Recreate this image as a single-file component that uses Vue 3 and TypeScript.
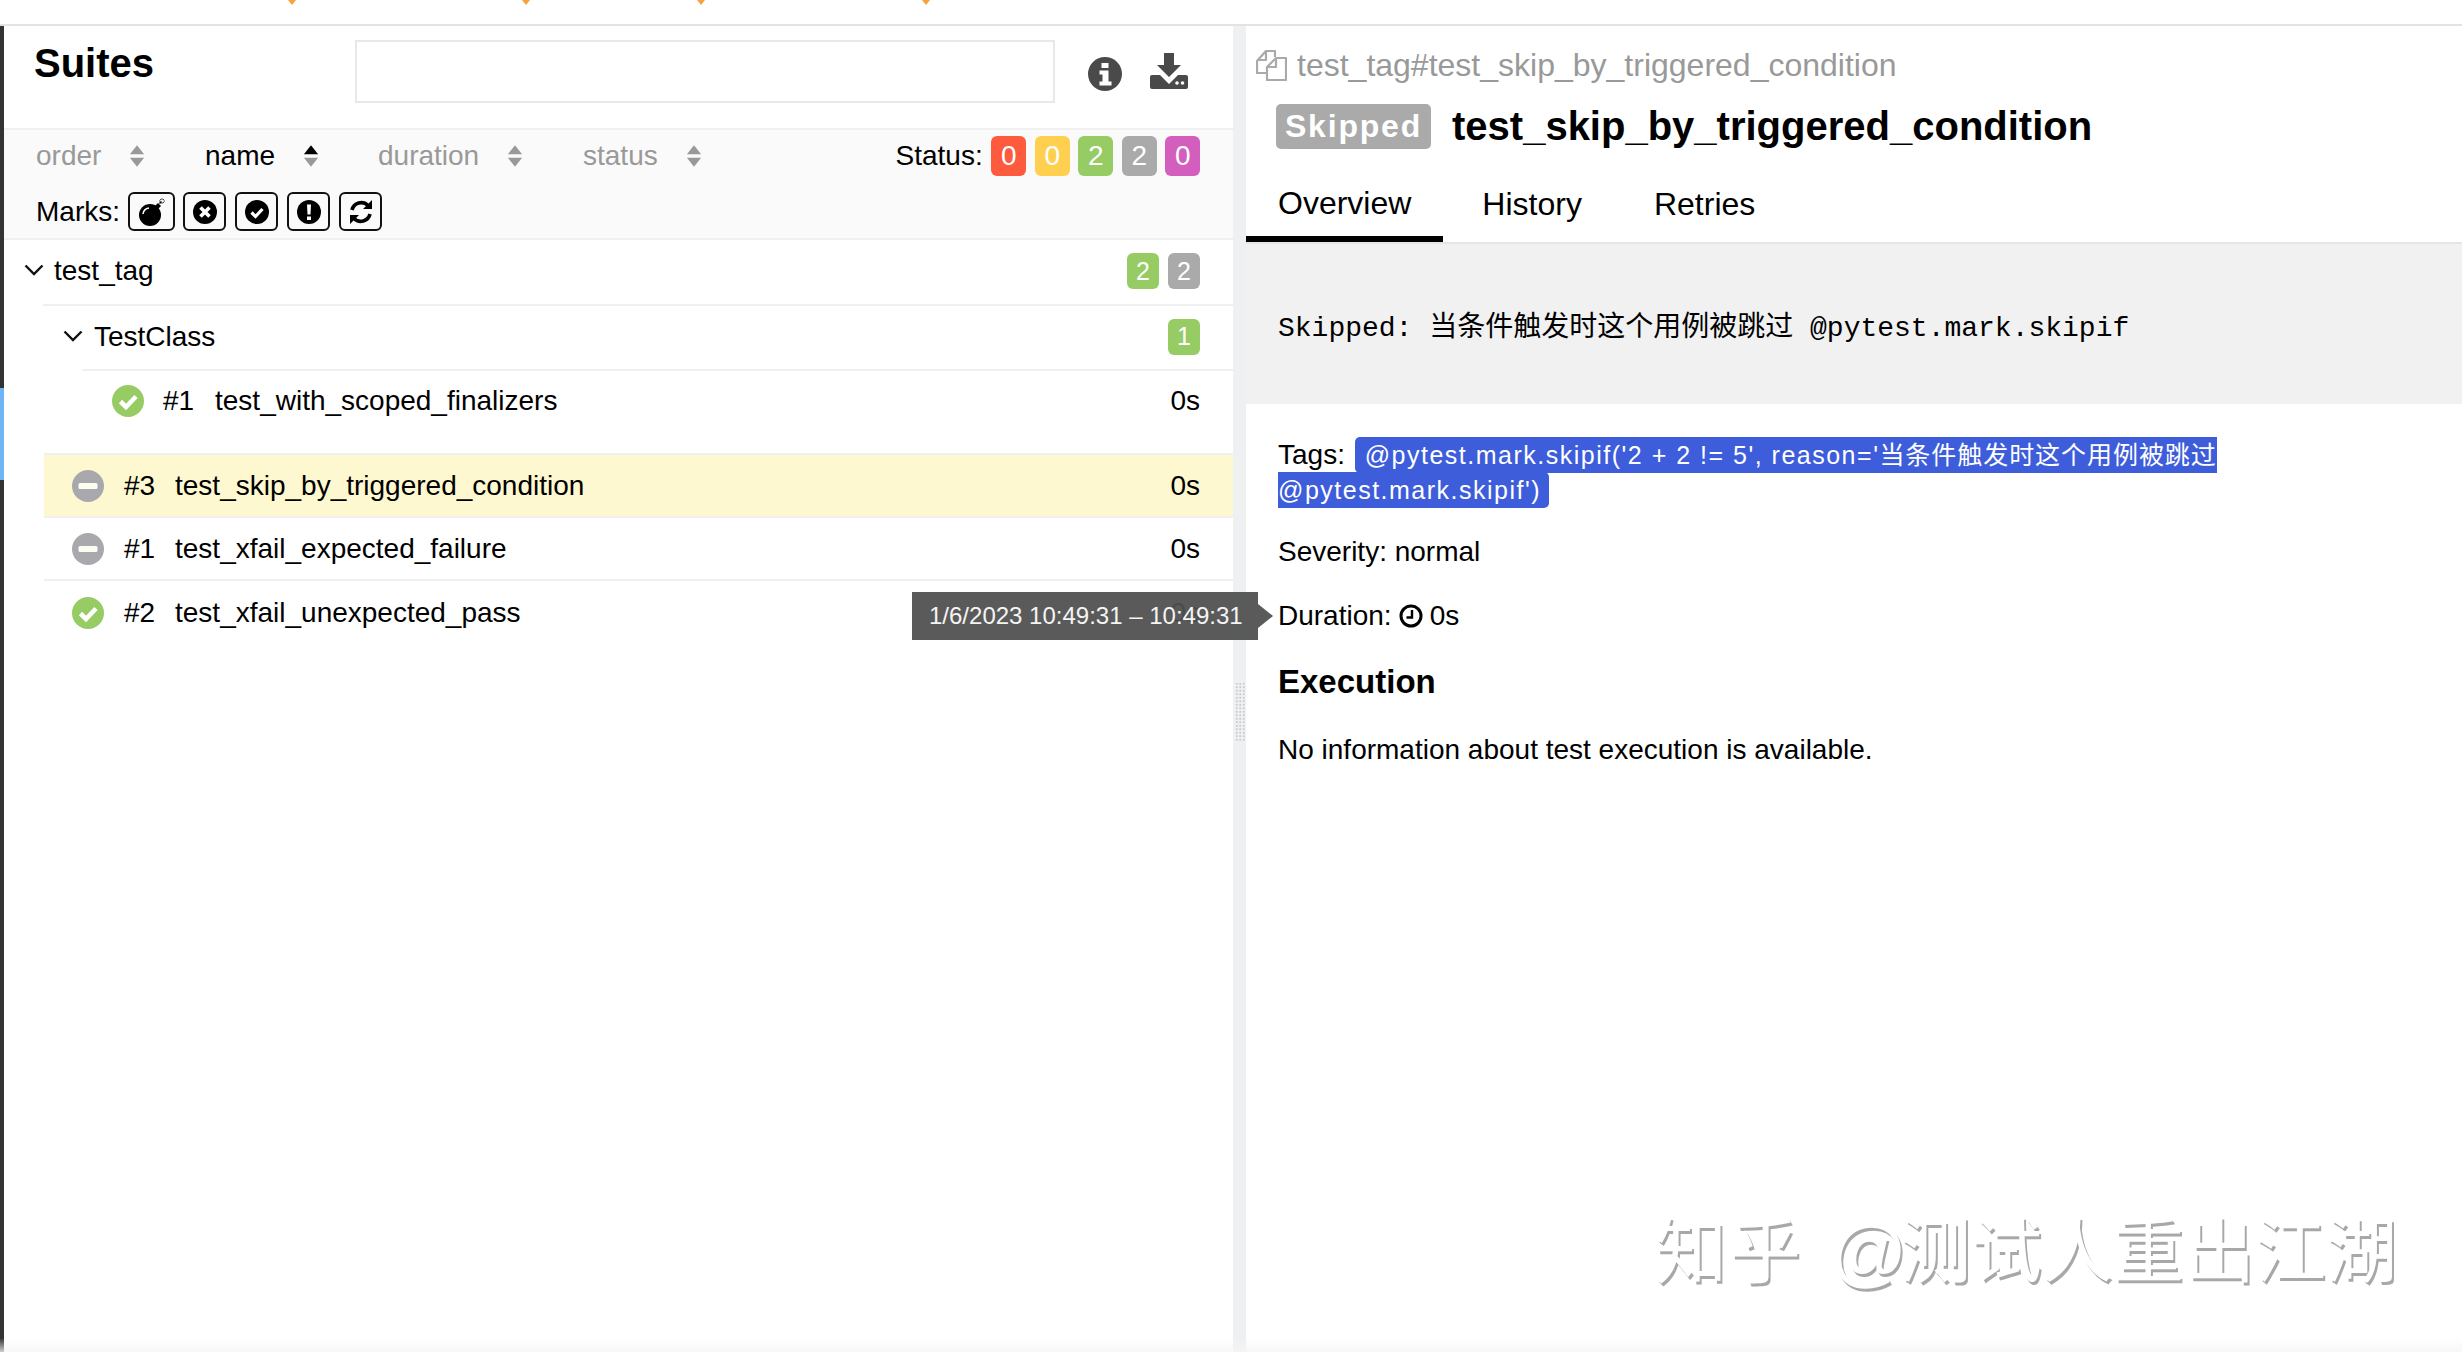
<script setup lang="ts">
interface Sorter { label: string; active?: boolean }
const sorters: Sorter[] = [
  { label: 'order' },
  { label: 'name', active: true },
  { label: 'duration' },
  { label: 'status' },
]
const statuses = [
  { n: 0, c: 'red' },
  { n: 0, c: 'yellow' },
  { n: 2, c: 'green' },
  { n: 2, c: 'grey' },
  { n: 0, c: 'pink' },
]
interface Leaf { id: string; name: string; status: 'pass' | 'skip'; active?: boolean }
const leaves: Leaf[] = [
  { id: '#3', name: 'test_skip_by_triggered_condition', status: 'skip', active: true },
  { id: '#1', name: 'test_xfail_expected_failure', status: 'skip' },
  { id: '#2', name: 'test_xfail_unexpected_pass', status: 'pass' },
]
</script>

<template>
  <div class="page">
    <div class="topbar"><i class="tick"></i><i class="tick"></i><i class="tick"></i><i class="tick"></i></div>
    <div class="split">
      <div class="rail"><div class="rail-a"></div><div class="rail-b"></div><div class="rail-c"></div></div>
      <section class="left">
        <header class="suites-head">
          <h2 class="suites-title">Suites</h2>
          <div class="search"></div>
          <svg class="info" viewBox="0 0 34 34"><circle cx="17" cy="17" r="17" fill="#4a4a4a"/><path fill="#fff" d="M13.5 6h7v5h-7zM11.5 13.500h9v11h3v4h-12v-4h3v-7h-3z"/></svg>
          <svg class="download" viewBox="0 0 38 36"><path fill="#4a4a4a" d="M14 0h10v12h7L19 24 7 12h7z"/><path fill="#4a4a4a" d="M2 22h8l9 9 9-9h8q2 0 2 2v10q0 2-2 2H2q-2 0-2-2V24q0-2 2-2z"/><circle cx="27" cy="30" r="1.800" fill="#fff"/><circle cx="32.500" cy="30" r="1.800" fill="#fff"/></svg>
        </header>
        <div class="controls">
          <div class="sort-row">
            <div v-for="s in sorters" :key="s.label" class="sorter" :class="[s.label, { on: s.active }]">
              <span>{{ s.label }}</span>
              <svg class="sort-ic" viewBox="0 0 18 24"><path :fill="s.active ? '#000' : '#999'" d="M9 0l8 10H1z"/><path fill="#999" d="M9 24L1 14h16z"/></svg>
            </div>
            <div class="status-wrap">
              <span class="status-label">Status:</span>
              <span v-for="(s, i) in statuses" :key="i" class="count" :class="s.c">{{ s.n }}</span>
            </div>
          </div>
          <div class="marks-row">
            <span class="marks-label">Marks:</span>
            <span class="mark wide">
              <svg viewBox="0 0 30 30" width="30" height="30"><circle cx="13" cy="18" r="11" fill="#000"/><path d="M18 9l3-3 3 3-3 3z" fill="#000"/><path d="M22.500 6.500l2-2" stroke="#000" stroke-width="1.500"/><path d="M25 1v2M25 5v2M22 4h1.500M26.500 4H28M23 2l1 1M27 2l-1 1M27 6l-1-1" stroke="#333" stroke-width=".9"/><path d="M6 17a7 7 0 0 1 6-6" stroke="#fff" stroke-width="1.500" fill="none"/></svg>
            </span>
            <span class="mark">
              <svg viewBox="0 0 24 24" width="24" height="24"><circle cx="12" cy="12" r="12" fill="#000"/><path d="M7.500 7.500l9 9M16.500 7.500l-9 9" stroke="#fff" stroke-width="3.600"/></svg>
            </span>
            <span class="mark">
              <svg viewBox="0 0 24 24" width="24" height="24"><circle cx="12" cy="12" r="12" fill="#000"/><path d="M6.500 12.500l4 4 7-7.500" stroke="#fff" stroke-width="3.200" fill="none"/></svg>
            </span>
            <span class="mark">
              <svg viewBox="0 0 24 24" width="24" height="24"><circle cx="12" cy="12" r="12" fill="#000"/><path fill="#fff" d="M10 4.500h4l-.5 10h-3zM10 16.500h4v3.500h-4z"/></svg>
            </span>
            <span class="mark">
              <svg viewBox="0 0 26 26" width="26" height="26"><path fill="none" stroke="#000" stroke-width="3.600" d="M4 11a9.500 9.500 0 0 1 16-4.500M22 15a9.500 9.500 0 0 1-16 4.500"/><path d="M24 1v9h-9zM2 25v-9h9z" fill="#000"/></svg>
            </span>
          </div>
        </div>
        <div class="tree-row top-node">
          <svg class="chev" viewBox="0 0 20 12"><path d="M1.500 1.500L10 10l8.500-8.500" fill="none" stroke="#111" stroke-width="2.400"/></svg>
          <span class="node-name">test_tag</span>
          <span class="mini green">2</span><span class="mini grey">2</span>
        </div>
        <div class="tree-row class-node">
          <svg class="chev" viewBox="0 0 20 12"><path d="M1.500 1.500L10 10l8.500-8.500" fill="none" stroke="#111" stroke-width="2.400"/></svg>
          <span class="node-name">TestClass</span>
          <span class="mini green">1</span>
        </div>
        <div class="tree-row leaf deep">
          <svg class="st" viewBox="0 0 32 32"><circle cx="16" cy="16" r="16" fill="#97cc64"/><path d="M8.500 16.500l5.500 5.500 10-10.500" stroke="#fff" stroke-width="4.600" fill="none"/></svg>
          <span class="leaf-id">#1</span>
          <span class="leaf-name">test_with_scoped_finalizers</span>
          <span class="time">0s</span>
        </div>
        <div v-for="l in leaves" :key="l.name" class="tree-row leaf" :class="{ active: l.active }">
          <svg v-if="l.status === 'skip'" class="st" viewBox="0 0 32 32"><circle cx="16" cy="16" r="16" fill="#a9a9ad"/><rect x="6.500" y="13" width="19" height="6" rx="1.500" fill="#fdfcf0"/></svg>
          <svg v-else class="st" viewBox="0 0 32 32"><circle cx="16" cy="16" r="16" fill="#97cc64"/><path d="M8.500 16.500l5.500 5.500 10-10.500" stroke="#fff" stroke-width="4.600" fill="none"/></svg>
          <span class="leaf-id">{{ l.id }}</span>
          <span class="leaf-name">{{ l.name }}</span>
          <span class="time">0s</span>
        </div>
      </section>
      <div class="splitter"><div class="grip"></div></div>
      <section class="right">
        <div class="path">
          <svg class="copy" viewBox="0 0 31 31"><path fill="none" stroke="#aaa" stroke-width="2.200" stroke-linejoin="round" d="M19 7V1H10L1 11v12h10"/><path fill="none" stroke="#aaa" stroke-width="2.200" stroke-linejoin="round" d="M20 8h10v22H11V17zM20 8v9h-9M10 1v9H1"/></svg>
          <span>test_tag#test_skip_by_triggered_condition</span>
        </div>
        <div class="title-row">
          <span class="skipped">Skipped</span>
          <h1 class="title">test_skip_by_triggered_condition</h1>
        </div>
        <nav class="tabs">
          <span class="tab on">Overview</span>
          <span class="tab">History</span>
          <span class="tab">Retries</span>
        </nav>
        <div class="message">Skipped: 当条件触发时这个用例被跳过 @pytest.mark.skipif</div>
        <div class="body">
          <p class="tags">Tags: <span class="tag">@pytest.mark.skipif('2 + 2 != 5', reason='<span class="tag-cjk">当条件触发时这个用例被跳过</span> @pytest.mark.skipif')</span></p>
          <p class="severity">Severity: normal</p>
          <p class="dur">Duration:
            <svg class="clock" viewBox="0 0 24 24"><circle cx="12" cy="12" r="10" fill="none" stroke="#000" stroke-width="3"/><path d="M13 6v7.500H7.500" fill="none" stroke="#000" stroke-width="2.400"/></svg>
            0s</p>
          <h3 class="exec">Execution</h3>
          <p class="noinfo">No information about test execution is available.</p>
        </div>
      </section>
    </div>
    <div class="tooltip">1/6/2023 10:49:31 – 10:49:31</div>
    <div class="watermark"><span class="wm-a">知乎</span> <span class="wm-at">@</span><span class="wm-b">测试人重出江湖</span></div>
    <div class="fade"></div>
  </div>
</template>

<style>
html, body { margin: 0; background: #fff; }
</style>

<style scoped>
.page {
  position: relative;
  width: 2462px;
  height: 1352px;
  overflow: hidden;
  display: flex;
  flex-direction: column;
  background: #fff;
  color: #000;
  font-family: "Liberation Sans", "Noto Sans CJK SC", sans-serif;
  font-size: 28px;
}
.topbar {
  height: 24px;
  flex: none;
  display: flex;
  border-bottom: 2px solid #e3e3e3;
  padding-left: 288px;
}
.tick {
  width: 0; height: 0;
  border: 4px solid transparent;
  border-top: 5px solid #f5a33d;
  border-bottom: 0;
}
.tick:nth-child(2) { margin-left: 226px; }
.tick:nth-child(3) { margin-left: 167px; }
.tick:nth-child(4) { margin-left: 217px; }
.split { flex: 1; display: flex; min-height: 0; }
.rail { width: 4px; flex: none; display: flex; flex-direction: column; }
.rail-a { height: 362px; background: #333; }
.rail-b { height: 92px; background: #6cb6f5; }
.rail-c { flex: 1; background: #333; }
.left { width: 1229px; flex: none; }
.suites-head {
  height: 102px;
  border-bottom: 2px solid #f0f0f0;
  display: flex;
  align-items: flex-start;
  padding-left: 30px;
}
.suites-title { margin: 15px 0 0; width: 321px; font-size: 40px; line-height: 45px; font-weight: 700; }
.search { width: 700px; height: 63px; margin-top: 14px; box-sizing: border-box; border: 2px solid #e8e8e8; }
.info { width: 34px; height: 34px; margin: 31px 0 0 33px; }
.download { width: 38px; height: 36px; margin: 27px 0 0 28px; }
.controls { height: 108px; background: #fafafa; border-bottom: 2px solid #f0f0f0; }
.sort-row { height: 52px; display: flex; align-items: center; }
.sorter { display: flex; align-items: center; color: #999; font-size: 28px; }
.sorter.on { color: #000; }
.sort-ic { width: 16px; height: 24px; }
.sorter.order { margin-left: 32px; width: 169px; }
.sorter.order .sort-ic { margin-left: 28px; }
.sorter.name { width: 173px; }
.sorter.name .sort-ic { margin-left: 28px; }
.sorter.duration { width: 205px; }
.sorter.duration .sort-ic { margin-left: 28px; }
.sorter.status { width: 312.500px; }
.sorter.status .sort-ic { margin-left: 28px; }
.status-wrap { display: flex; align-items: center; }
.status-label { margin-right: 8.500px; }
.count {
  width: 35px; height: 40px; border-radius: 6px; color: #fff;
  display: flex; align-items: center; justify-content: center;
  margin-right: 8.500px; font-size: 28px;
}
.red { background: #fd5a3e; }
.yellow { background: #ffd050; }
.green { background: #97cc64; }
.grey { background: #aaa; }
.pink { background: #d35ebe; }
.marks-row { height: 56px; display: flex; align-items: center; padding-left: 32px; padding-top: 3px; box-sizing: border-box; }
.marks-label { margin-right: 8px; }
.mark {
  box-sizing: border-box;
  width: 43px; height: 39px;
  border: 2px solid #111; border-radius: 6px;
  display: flex; align-items: center; justify-content: center;
  margin-right: 9px;
}
.mark.wide { width: 47px; margin-right: 8px; }
.tree-row { display: flex; align-items: center; box-sizing: border-box; }
.top-node { height: 64px; padding: 0 33px 2px 20px; }
.class-node { height: 65px; margin-left: 39px; border-top: 2px solid #f0f0f0; padding: 0 33px 2px 20px; }
.chev { width: 20px; height: 12px; margin-right: 10px; }
.top-node .chev { margin-top: -2px; }
.class-node .chev { margin-top: -2px; margin-right: 11px; }
.node-name { flex: 1; }
.mini {
  width: 32px; height: 36px; border-radius: 6px; color: #fff;
  display: flex; align-items: center; justify-content: center;
  font-size: 25px; margin-left: 9px;
}
.leaf { height: 63px; margin-left: 40px; border-top: 2px solid #f0f0f0; padding: 0 33px 0 28px; }
.leaf.deep { height: 84px; margin-left: 78px; padding: 0 33px 22px 30px; }
.leaf.deep .st { margin-right: 19px; }
.leaf:last-child { padding-top: 2px; }
.leaf.active { background: #fef8d0; }
.st { width: 32px; height: 32px; margin-right: 20px; flex: none; }
.leaf-id { width: 51px; flex: none; }
.leaf-name { flex: 1; }
.time { flex: none; }
.leaf.deep .leaf-id { width: 52px; }
.splitter {
  width: 13px; flex: none; background: #eef0f2;
  display: flex; justify-content: center; padding-top: 656px; box-sizing: border-box;
}
.grip {
  width: 10px; height: 60px;
  background-image: radial-gradient(circle, #c9c9c9 1.200px, transparent 1.300px);
  background-size: 3.500px 3.500px;
}
.right { flex: 1; min-width: 0; }
.path { height: 78px; display: flex; align-items: center; padding-left: 10px; color: #999; font-size: 32px; box-sizing: border-box; }
.copy { width: 31px; height: 31px; margin-right: 10px; }
.title-row { height: 45px; display: flex; align-items: center; padding-left: 30px; }
.skipped {
  width: 155px; height: 45px; border-radius: 5px; background: #aaa; color: #fff;
  font-weight: 700; font-size: 32px; letter-spacing: 1.800px;
  display: flex; align-items: center; justify-content: center;
}
.title { margin: 0 0 0 21px; font-size: 40px; line-height: 45px; font-weight: 700; }
.tabs { height: 95px; box-sizing: border-box; border-bottom: 2px solid #e5e5e5; display: flex; align-items: flex-end; }
.tab { box-sizing: border-box; height: 63px; padding: 0 32px; line-height: 50px; font-size: 32px; margin-right: 8px; }
.tab.on { border-bottom: 6px solid #000; height: 64px; margin-right: 7px; }
.message {
  height: 160px; background: #f1f1f2; display: flex; align-items: center; padding-left: 32px;
  font-family: "Liberation Mono", "Noto Sans CJK SC", monospace; font-size: 28px;
}
.body { padding-left: 32px; }
.body p { margin: 0; }
.tags { padding-top: 34px; line-height: 34.500px; width: 960px; font-size: 28px; }
.tag { background: #3d5ddb; color: #fff; padding: 4px 8px 4px 10px; border-radius: 5px; letter-spacing: 1.500px; font-size: 25px; margin-left: 2px; }
.tag-cjk { letter-spacing: .95px; }
.severity { margin-top: 27px !important; line-height: 36px; }
.dur { margin-top: 28px !important; line-height: 36px; display: flex; align-items: center; gap: 7px; }
.clock { width: 24px; height: 24px; }
.exec { margin: 28px 0 0; font-size: 33px; line-height: 40px; font-weight: 700; }
.noinfo { margin-top: 30px !important; line-height: 36px; }
.tooltip {
  position: absolute; left: 912px; top: 592px; width: 346px; height: 48px; box-sizing: border-box;
  background: rgba(80,80,80,.94); color: #f4f4f4; font-size: 24px; line-height: 48px; padding-left: 17px; white-space: nowrap;
}
.tooltip::after {
  content: ""; position: absolute; left: 100%; top: 12px;
  border: 12px solid transparent; border-left: 15px solid rgba(80,80,80,.94); border-right: 0;
}
.watermark {
  position: absolute; left: 1655px; top: 1207px; white-space: nowrap;
  font-size: 72px; line-height: 90px; color: #fff; text-shadow: 2px 3px 0 #a8a8a8;
  display: flex;
}
.wm-a { font-size: 72px; letter-spacing: 2px; margin-right: 27px; }
.wm-at { width: 70px; text-align: center; font-size: 76px; }
.wm-b { font-size: 71px; }
.fade {
  position: absolute; left: 0; right: 0; bottom: 0; height: 14px;
  background: linear-gradient(rgba(245,245,245,0), rgba(245,245,245,.8));
}
</style>
